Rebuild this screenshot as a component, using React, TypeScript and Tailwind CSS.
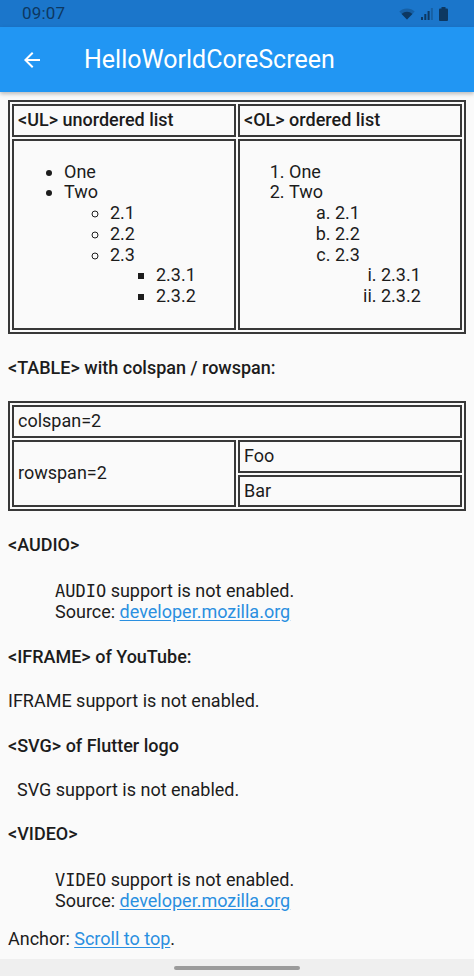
import React from "react";

const cellBox = "border-2 border-[#383838] p-1";
const cell = `${cellBox} align-top`;

function StatusBar() {
  return (
    <div className="h-[27px] bg-[#1b76cb] flex items-center px-[22px] font-['Roboto',sans-serif]">
      <span className="text-[17px] text-[#0d3862] tracking-[0.2px]">09:07</span>
      <div className="ml-auto flex items-center gap-[6px] mr-[4px] text-[#0d3862]">
        {/* wifi */}
        <svg width="16" height="12" viewBox="0 0 16 12" fill="currentColor">
          <path d="M8 11.5 0.3 3.6A11 11 0 0 1 15.7 3.6Z" opacity="0.35" />
          <path d="M8 11.5 2.6 6A7.6 7.6 0 0 1 13.4 6Z" />
        </svg>
        {/* signal */}
        <svg width="12" height="12" viewBox="0 0 12 12" fill="currentColor">
          <rect x="0" y="9" width="2" height="3" />
          <rect x="3.3" y="6" width="2" height="6" />
          <rect x="6.6" y="3" width="2" height="9" />
          <rect x="9.9" y="0" width="2" height="12" opacity="0.35" />
        </svg>
        {/* battery */}
        <svg width="9" height="14" viewBox="0 0 9 14" fill="currentColor">
          <rect x="2.5" y="0" width="4" height="2" />
          <rect x="0" y="1.5" width="9" height="12.5" rx="1" />
        </svg>
      </div>
    </div>
  );
}

function AppBar() {
  return (
    <div className="h-[65px] bg-[#2196f3] flex items-center shadow-[0_2px_4px_rgba(0,0,0,0.25)] relative z-10">
      <svg className="ml-[20px]" width="24" height="24" viewBox="0 0 24 24" fill="#ffffff">
        <path d="M20 11H7.83l5.59-5.59L12 4l-8 8 8 8 1.41-1.41L7.83 13H20v-2z" />
      </svg>
      <span className="ml-[40px] text-white text-[25px] font-['Roboto',sans-serif]">HelloWorldCoreScreen</span>
    </div>
  );
}

function ListsTable() {
  return (
    <table className="w-full table-fixed border-separate border-spacing-[2px] border-2 border-[#383838]">
      <tbody>
        <tr>
          <td className={`${cell} w-1/2 font-medium`}>&lt;UL&gt; unordered list</td>
          <td className={`${cell} w-1/2 font-medium`}>&lt;OL&gt; ordered list</td>
        </tr>
        <tr>
          <td className={cell}>
            <ul className="list-disc pl-[46px] my-[17px]">
              <li>One</li>
              <li>
                Two
                <ul className="list-[circle] pl-[46px]">
                  <li>2.1</li>
                  <li>2.2</li>
                  <li>
                    2.3
                    <ul className="list-[square] pl-[46px]">
                      <li>2.3.1</li>
                      <li>2.3.2</li>
                    </ul>
                  </li>
                </ul>
              </li>
            </ul>
          </td>
          <td className={cell}>
            <ol className="list-decimal pl-[45px] my-[17px]">
              <li>One</li>
              <li>
                Two
                <ol className="list-[lower-alpha] pl-[46px]">
                  <li>2.1</li>
                  <li>2.2</li>
                  <li>
                    2.3
                    <ol className="list-[lower-roman] pl-[46px]">
                      <li>2.3.1</li>
                      <li>2.3.2</li>
                    </ol>
                  </li>
                </ol>
              </li>
            </ol>
          </td>
        </tr>
      </tbody>
    </table>
  );
}

function SpanTable() {
  return (
    <table className="w-full table-fixed border-separate border-spacing-[2px] border-2 border-[#383838]">
      <tbody>
        <tr>
          <td colSpan={2} className={cell}>colspan=2</td>
        </tr>
        <tr>
          <td rowSpan={2} className={`${cellBox} w-1/2 align-middle`}>rowspan=2</td>
          <td className={`${cell} w-1/2`}>Foo</td>
        </tr>
        <tr>
          <td className={cell}>Bar</td>
        </tr>
      </tbody>
    </table>
  );
}

function Link({ children }: { children: React.ReactNode }) {
  return <span className="text-[#2a8fe0] underline underline-offset-[2px]">{children}</span>;
}

function Heading({ children, className = "" }: { children: React.ReactNode; className?: string }) {
  return <div className={`font-medium ${className}`}>{children}</div>;
}

export default function App() {
  return (
    <div className="h-[976px] w-[474px] flex flex-col bg-[#fafafa] overflow-hidden">
      <StatusBar />
      <AppBar />
      <div className="flex-1 overflow-hidden px-2 pt-2 text-[18px] leading-[20.7px] text-[#1c1c1c] font-['Roboto',sans-serif]">
        <ListsTable />

        <Heading className="mt-[24px]">&lt;TABLE&gt; with colspan / rowspan:</Heading>
        <div className="mt-[23px]">
          <SpanTable />
        </div>

        <Heading className="mt-[24px]">&lt;AUDIO&gt;</Heading>
        <div className="mt-[25px] pl-[47px]">
          <div>
            <span className="font-['DejaVu_Sans_Mono',monospace] text-[17px]">AUDIO</span> support is not enabled.
          </div>
          <div>
            Source: <Link>developer.mozilla.org</Link>
          </div>
        </div>

        <Heading className="mt-[24px]">&lt;IFRAME&gt; of YouTube:</Heading>
        <div className="mt-[24px]">IFRAME support is not enabled.</div>

        <Heading className="mt-[24px]">&lt;SVG&gt; of Flutter logo</Heading>
        <div className="mt-[23px] pl-[9px]">SVG support is not enabled.</div>

        <Heading className="mt-[24px]">&lt;VIDEO&gt;</Heading>
        <div className="mt-[25px] pl-[47px]">
          <div>
            <span className="font-['DejaVu_Sans_Mono',monospace] text-[17px]">VIDEO</span> support is not enabled.
          </div>
          <div>
            Source: <Link>developer.mozilla.org</Link>
          </div>
        </div>

        <div className="mt-[18px]">
          Anchor: <Link>Scroll to top</Link>.
        </div>
      </div>
      <div className="h-[17px] bg-[#efefef] flex items-center justify-center">
        <div className="w-[126px] h-[4px] rounded-full bg-[#9b9b9b]" />
      </div>
    </div>
  );
}
